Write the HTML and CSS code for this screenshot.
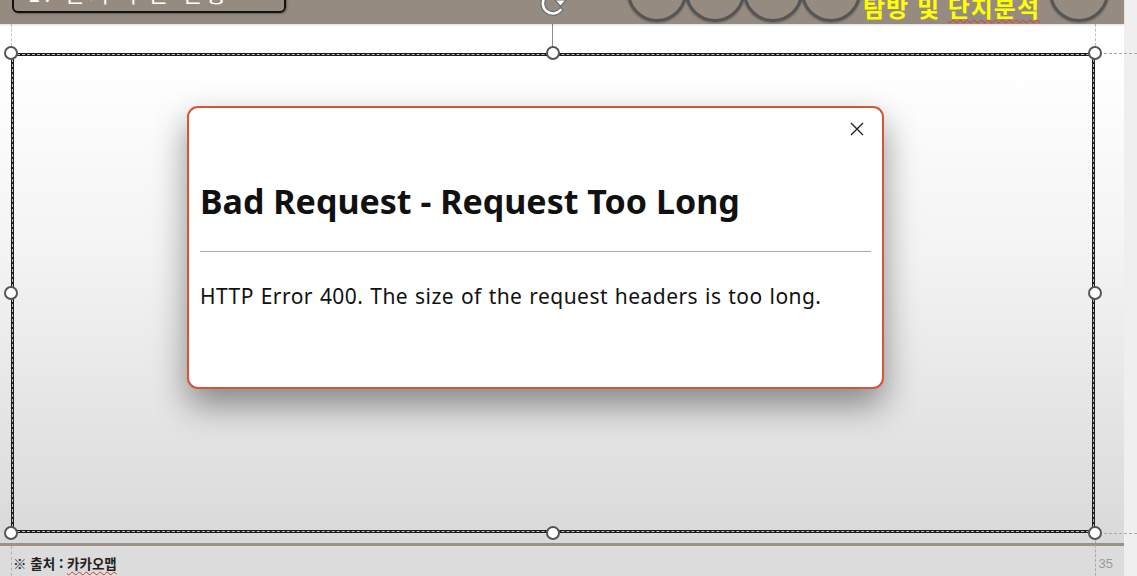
FILE: index.html
```html
<!DOCTYPE html>
<html lang="ko">
<head>
<meta charset="utf-8">
<title>Bad Request</title>
<link rel="stylesheet" href="styles.css">
</head>
<body>
<div class="screen">
  <div class="slide">
    <header class="banner">
      <div class="label-box"><span class="label-text">1. 단지 주변 현황</span></div>
      <div class="steps">
        <span class="step"></span><span class="step"></span><span class="step"></span><span class="step"></span>
        <span class="step-title">탐방 및 <span class="spell">단지분석</span></span>
        <span class="step"></span>
      </div>
    </header>
    <main class="canvas">
      <div class="frame">
        <section class="dialog">
          <button class="close" aria-label="닫기">
            <svg width="16" height="16" viewBox="0 0 16 16"><path d="M2 2 L14 14 M14 2 L2 14" stroke="#222" stroke-width="1.4" fill="none"/></svg>
          </button>
          <h1 class="title">Bad Request - Request Too Long</h1>
          <hr class="divider">
          <p class="message">HTTP Error 400. The size of the request headers is too long.</p>
        </section>
        <span class="handle h-tl"></span><span class="handle h-tc"></span><span class="handle h-tr"></span>
        <span class="handle h-ml"></span><span class="handle h-mr"></span>
        <span class="handle h-bl"></span><span class="handle h-bc"></span><span class="handle h-br"></span>
        <span class="rot-line"></span>
        <svg class="rot-icon" width="34" height="34" viewBox="0 0 34 34"><path d="M23.5 9 A10 10 0 1 0 24.5 23" stroke="#6e6e6e" stroke-width="5" fill="none" stroke-linecap="round"/><path d="M23.5 9 A10 10 0 1 0 24.5 23" stroke="#fff" stroke-width="2.6" fill="none" stroke-linecap="round"/><path d="M19 13 L30 13 L24.5 19.5 Z" fill="#fff" stroke="#6e6e6e" stroke-width="1.2" stroke-linejoin="round"/></svg>
      </div>
    </main>
    <div class="rule"></div>
    <footer class="footer">
      <span class="source">※ 출처 : <span class="spell">카카오맵</span></span>
      <span class="page-no">35</span>
    </footer>
  </div>
  <aside class="sidebar"></aside>
  <span class="guide g-v-left-top"></span>
  <span class="guide g-v-left-bot"></span>
  <span class="guide g-v-right-top"></span>
  <span class="guide g-v-right-bot"></span>
  <span class="guide g-h-top"></span>
  <span class="guide g-h-bot"></span>
</div>
</body>
</html>
```

FILE: styles.css
```css
* { box-sizing: border-box; }
html, body { margin: 0; padding: 0; }
body {
  width: 1137px;
  height: 576px;
  overflow: hidden;
  font-family: "Noto Sans", "Noto Sans CJK KR", sans-serif;
}
.screen {
  position: relative;
  display: grid;
  grid-template-columns: 1124px 13px;
  width: 1137px;
  height: 576px;
}
.slide {
  display: flex;
  flex-direction: column;
  height: 576px;
}
.sidebar { background: #efefef; }

/* banner */
.banner {
  height: 24px;
  flex: none;
  background: #968b81;
  display: flex;
  align-items: flex-end;
  overflow: hidden;
  box-shadow: 0 1px 2px rgba(0,0,0,.15);
  position: relative;
  z-index: 1;
}
.label-box {
  margin: 0 0 11px 12px;
  width: 274px;
  height: 40px;
  border: 2px solid #111;
  border-radius: 6px;
  display: flex;
  align-items: flex-end;
  padding: 0 0 8px 14px;
  box-shadow: 1px 1px 2px rgba(0,0,0,.3);
}
.label-text {
  color: #fff;
  font-family: "Noto Sans CJK KR", sans-serif;
  font-size: 22px;
  line-height: 22px;
  letter-spacing: 4px;
}
.steps {
  margin-left: 341px;
  display: flex;
  align-items: flex-end;
  height: 24px;
}
.step {
  width: 60px;
  height: 60px;
  margin-bottom: 2px;
  margin-right: -2px;
  border: 3px solid #555;
  border-radius: 50%;
  flex: none;
  box-shadow: 0 1px 2px rgba(0,0,0,.3);
}
.step-title {
  font-family: "Noto Sans CJK KR", sans-serif;
  font-weight: 700;
  font-size: 24px;
  line-height: 24px;
  color: #ffff00;
  margin: 0 9px 5px 4px;
  white-space: nowrap;
  letter-spacing: 1px;
}
.spell {
  text-decoration: underline wavy #e0302a;
  text-decoration-thickness: 1px;
  text-underline-offset: 2px;
}

/* canvas */
.canvas {
  height: 519px;
  flex: none;
  background: linear-gradient(#ffffff 0%, #ffffff 8%, #f3f3f3 45%, #d9d9d9 100%);
  padding: 29px 29px 10px 11px;
}
.frame {
  position: relative;
  width: 1084px;
  height: 480px;
  border: 3px solid #1c1c1c;
  padding: 50px 0 0 173px;
}
.frame::before {
  content: "";
  position: absolute;
  inset: -2px;
  border: 1px dashed #bbb;
  pointer-events: none;
}
.dialog {
  position: relative;
  width: 697px;
  height: 283px;
  background: #fff;
  border: 2px solid #d2573a;
  border-radius: 11px;
  box-shadow: 0 16px 34px rgba(0,0,0,.42);
  padding: 0 11px;
}
.close {
  position: absolute;
  top: 12px;
  right: 16px;
  width: 18px;
  height: 18px;
  border: 0;
  padding: 0;
  background: none;
  display: flex;
  align-items: center;
  justify-content: center;
}
.title {
  margin: 70px 0 0 0;
  font-size: 34px;
  line-height: 46px;
  font-weight: 700;
  color: #111;
}
.divider {
  margin: 27px 0 0 0;
  border: 0;
  border-top: 1px solid #a9a9a9;
}
.message {
  margin: 30px 0 0 0;
  font-size: 21px;
  line-height: 28px;
  color: #111;
  letter-spacing: 0.45px;
  word-spacing: 1px;
}

/* handles */
.handle {
  position: absolute;
  width: 14px;
  height: 14px;
  border: 2.5px solid #555;
  border-radius: 50%;
  background: #fff;
  z-index: 2;
}
.h-tl { left: -10px; top: -10px; }
.h-tc { left: 532px; top: -10px; }
.h-tr { right: -10px; top: -10px; }
.h-ml { left: -10px; top: 230px; }
.h-mr { right: -10px; top: 230px; }
.h-bl { left: -10px; bottom: -10px; }
.h-bc { left: 532px; bottom: -10px; }
.h-br { right: -10px; bottom: -10px; }
.rot-line {
  position: absolute;
  left: 538px;
  top: -39px;
  width: 1px;
  height: 34px;
  background: #8a8a8a;
}
.rot-icon {
  position: absolute;
  left: 522px;
  top: -69px;
  z-index: 3;
}

/* rule & footer */
.rule {
  height: 3px;
  flex: none;
  background: #9b9187;
}
.footer {
  flex: 1;
  background: #dcdcdc;
  display: flex;
  align-items: center;
  justify-content: space-between;
  padding: 4px 0 0 13px;
}
.source {
  font-family: "Noto Sans CJK KR", sans-serif;
  font-weight: 700;
  font-size: 13.5px;
  color: #222;
}
.page-no {
  font-family: "Liberation Sans", sans-serif;
  font-size: 13px;
  color: #9a9a9a;
  margin-right: 11px;
}

/* guides */
.guide { position: absolute; pointer-events: none; }
.g-v-left-top { left: 11px; top: 0; height: 46px; border-left: 1px dashed #c4c4c4; }
.g-v-left-bot { left: 11px; top: 546px; height: 30px; border-left: 1px dashed #b0b0b0; }
.g-v-right-top { left: 1095px; top: 0; height: 46px; border-left: 1px dashed #bdbdbd; }
.g-v-right-bot { left: 1095px; top: 540px; height: 36px; border-left: 1px dashed #aaa; }
.g-h-top { left: 1104px; top: 53px; width: 33px; border-top: 1px dashed #aaa; }
.g-h-bot { left: 1104px; top: 533px; width: 33px; border-top: 1px dashed #aaa; }
```
